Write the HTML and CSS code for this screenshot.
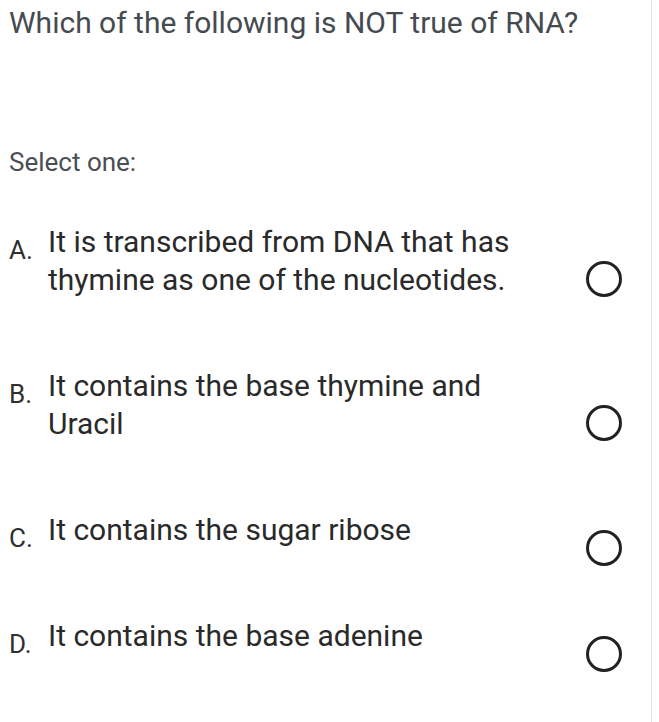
FILE: index.html
```html
<!DOCTYPE html>
<html>
<head>
<meta charset="utf-8">
<link rel="stylesheet" href="styles.css">
</head>
<body>
<div class="page">
  <h1 class="question">Which of the following is NOT true of RNA?</h1>
  <p class="prompt">Select one:</p>
  <div class="options">
    <div class="option">
      <div class="content">
        <span class="letter">A.</span>
        <span class="text">It is transcribed from DNA that has thymine as one of the nucleotides.</span>
      </div>
      <span class="radio"></span>
    </div>
    <div class="option">
      <div class="content">
        <span class="letter">B.</span>
        <span class="text">It contains the base thymine and Uracil</span>
      </div>
      <span class="radio"></span>
    </div>
    <div class="option">
      <div class="content">
        <span class="letter">C.</span>
        <span class="text">It contains the sugar ribose</span>
      </div>
      <span class="radio"></span>
    </div>
    <div class="option">
      <div class="content">
        <span class="letter">D.</span>
        <span class="text">It contains the base adenine</span>
      </div>
      <span class="radio"></span>
    </div>
  </div>
</div>
</body>
</html>
```

FILE: styles.css
```css
html, body {
  margin: 0;
  padding: 0;
  background: #fff;
}
body {
  font-family: Roboto, "Noto Sans", "Liberation Sans", sans-serif;
}
.page {
  width: 652px;
  min-height: 100vh;
  box-sizing: border-box;
  border-right: 1px solid #e3e3e3;
  padding-left: 9px;
  overflow: hidden;
}
.question {
  margin: 0;
  padding-top: 4px;
  font-size: 30px;
  line-height: 38px;
  font-weight: 400;
  color: #464b52;
}
.prompt {
  margin: 0;
  margin-top: 103px;
  font-size: 26px;
  line-height: 34px;
  color: #4a4f55;
}
.options {
  margin-top: 44px;
}
.option {
  display: flex;
  align-items: center;
  padding-bottom: 68px;
}
.option:last-child {
  padding-bottom: 0;
}
.content {
  flex: 1;
  display: flex;
  align-items: flex-start;
}
.letter {
  width: 39px;
  flex: none;
  font-size: 26px;
  line-height: 20px;
  padding-top: 17px;
  color: #2f2f2f;
}
.text {
  width: 480px;
  font-size: 30px;
  line-height: 38px;
  color: #2a2a2a;
}
.radio {
  flex: none;
  width: 30px;
  height: 30px;
  border: 3.5px solid #222;
  border-radius: 50%;
  margin-right: 29px;
  margin-top: 17.5px;
  margin-bottom: -17.5px;
}
```
